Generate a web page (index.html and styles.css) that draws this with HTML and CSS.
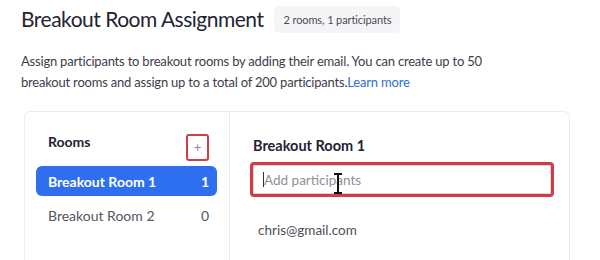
FILE: index.html
```html
<!DOCTYPE html>
<html>
<head>
<meta charset="utf-8">
<link rel="stylesheet" href="styles.css">
</head>
<body>
<div class="page">
  <div class="header">
    <h1 class="title">Breakout Room Assignment</h1>
    <span class="badge">2 rooms, 1 participants</span>
  </div>
  <p class="desc">Assign participants to breakout rooms by adding their email. You can create up to 50 breakout rooms and assign up to a total of 200 participants.<a class="link">Learn more</a></p>
  <div class="card">
    <div class="rooms">
      <div class="rooms-head">
        <span class="rooms-title">Rooms</span>
        <span class="add-btn">+</span>
      </div>
      <div class="room active"><span>Breakout Room 1</span><span>1</span></div>
      <div class="room"><span>Breakout Room 2</span><span>0</span></div>
    </div>
    <div class="detail">
      <div class="detail-title">Breakout Room 1</div>
      <div class="input-wrap">
        <div class="input"><span class="caret"></span><span class="placeholder">Add participants</span></div>
        <span class="ibeam"></span>
      </div>
      <div class="email">chris@gmail.com</div>
    </div>
  </div>
</div>
</body>
</html>
```
FILE: styles.css
```css
html, body { margin: 0; padding: 0; background: #fff; }
body { font-family: Lato, "Open Sans", sans-serif; color: #232333; overflow: hidden; }
.page { padding: 5px 0 0 21px; width: 560px; }
.header { display: flex; align-items: center; gap: 11px; }
.title { margin: 0; font-size: 21px; font-weight: 400; color: #232333; letter-spacing: -0.5px; line-height: 28px; }
.badge { background: #f5f5f7; color: #4a4a55; font-size: 11px; padding: 0 9px; height: 27px; line-height: 27px; border-radius: 5px; letter-spacing: -0.1px; }
.desc { margin: 18px 0 0; font-size: 13px; line-height: 21px; color: #3d3d4a; width: 470px; letter-spacing: -0.2px; }
.link { color: #2d6fd8; }
.card { margin: 18px 0 0 3px; width: 544px; height: 180px; border: 1px solid #ececef; border-radius: 6px; display: flex; }
.rooms { width: 181px; padding: 20px 12px 0 11px; border-right: 1px solid #ececef; flex: none; }
.rooms-head { display: flex; justify-content: space-between; align-items: center; padding: 0 8px 0 12px; height: 28px; margin-bottom: 6px; }
.rooms-title { font-size: 14px; font-weight: 700; color: #232333; margin-top: -10px; }
.add-btn { width: 19px; height: 23px; border: 2px solid #d23c44; border-radius: 3px; color: #8a8a94; font-size: 13px; display: flex; align-items: center; justify-content: center; margin-top: 2px; }
.room { display: flex; justify-content: space-between; align-items: center; height: 30px; padding: 0 8px 0 12px; font-size: 14px; color: #555560; border-radius: 6px; margin-bottom: 4px; }
.room.active { background: #2e6ff0; color: #fff; font-weight: 700; }
.detail { padding: 25px 0 0 20px; flex: 1; }
.detail-title { font-size: 14.5px; font-weight: 700; color: #232333; margin-left: 3px; }
.input-wrap { position: relative; margin-top: 8px; width: 304px; }
.input { height: 29px; border: 3px solid #d23c44; border-radius: 4px; display: flex; align-items: center; padding-left: 10px; box-shadow: inset 0 0 0 1px #d8d8dc; }
.caret { width: 1px; height: 15px; background: #333; }
.placeholder { font-size: 13.5px; color: #8f8f99; }
.ibeam { position: absolute; left: 87px; top: 11px; width: 2px; height: 21px; background: #111; }
.ibeam::before, .ibeam::after { content: ""; position: absolute; left: -3px; width: 8px; height: 2px; background: #111; }
.ibeam::before { top: 0; }
.ibeam::after { bottom: 0; }
.email { margin: 25px 0 0 8px; font-size: 13.5px; color: #4f4f5a; }
```
